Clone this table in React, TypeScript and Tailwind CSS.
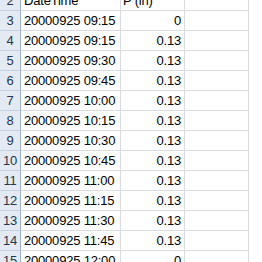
import React from 'react';

const rows: [number, string, string][] = [
    [2, 'DateTime', 'P (in)'],
    [3, '20000925 09:15', '0'],
    [4, '20000925 09:15', '0.13'],
    [5, '20000925 09:30', '0.13'],
    [6, '20000925 09:45', '0.13'],
    [7, '20000925 10:00', '0.13'],
    [8, '20000925 10:15', '0.13'],
    [9, '20000925 10:30', '0.13'],
    [10, '20000925 10:45', '0.13'],
    [11, '20000925 11:00', '0.13'],
    [12, '20000925 11:15', '0.13'],
    [13, '20000925 11:30', '0.13'],
    [14, '20000925 11:45', '0.13'],
    [15, '20000925 12:00', '0'],
];

export default function App() {
    return (
        <div className="w-[262px] h-[262px] overflow-hidden bg-white text-black font-['Liberation_Sans',Arial,sans-serif] text-[13px] tracking-[-0.2px] leading-none">
            <div className="-mt-[9px] flex flex-col">
                {rows.map(([n, date, p]) => {
                    const isHeader = n === 2;
                    return (
                        <div key={n} className="flex h-[20px]">
                            <div className="w-[21px] shrink-0 flex items-end justify-center pb-[3px] bg-[#e4eaf4] border-r border-b border-r-[#9eb0c8] border-b-[#c5d0e0] text-[#27364a]">
                                {n}
                            </div>
                            <div className="w-[100px] shrink-0 flex items-end pl-[3px] pb-[3px] border-r border-b border-[#d9dde3]">
                                {date}
                            </div>
                            <div className={`w-[64px] shrink-0 flex items-end pb-[3px] border-r border-b border-[#d9dde3] ${isHeader ? 'justify-start pl-[2px]' : 'justify-end pr-[3px]'}`}>
                                {p}
                            </div>
                            <div className="w-[64px] shrink-0 border-r border-b border-[#d9dde3]" />
                        </div>
                    );
                })}
            </div>
        </div>
    );
}
